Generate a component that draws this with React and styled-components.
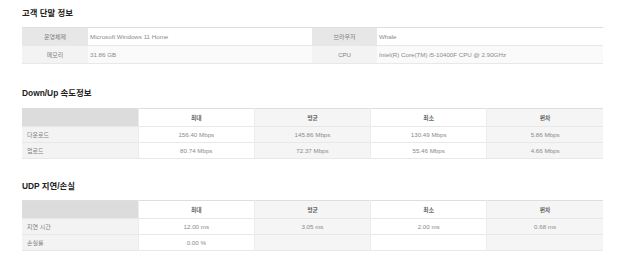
import React from 'react'
import styled, { createGlobalStyle } from 'styled-components'

const GlobalStyle = createGlobalStyle`
  html, body {
    margin: 0;
    padding: 0;
    background: #fff;
  }
  body {
    font-family: "Liberation Sans", "Noto Sans CJK KR", sans-serif;
  }
`

const Page = styled.div`
  width: 581px;
  padding: 7px 0 0 22px;
  display: flex;
  flex-direction: column;
`

const Section = styled.section`
  display: flex;
  flex-direction: column;
  gap: ${(p) => p.$gap || 8}px;
  margin-bottom: ${(p) => p.$mb || 21}px;
`

const Title = styled.h2`
  margin: 0;
  height: 12px;
  line-height: 12px;
  font-size: 8.4px;
  font-weight: 700;
  color: #222;
`

const Table = styled.table`
  width: 100%;
  table-layout: fixed;
  border-collapse: collapse;
  border-top: 1px solid #dedede;
  border-bottom: 1px solid #ececec;
`

const Row = styled.tr`
  height: ${(p) => p.$h || 17}px;
  border-bottom: 1px solid #e8e8e8;
`

const Label = styled.th`
  padding: 0 5px;
  font-size: 6px;
  font-weight: 400;
  color: #808080;
  text-align: ${(p) => (p.$left ? 'left' : 'center')};
  background: ${(p) => p.$bg || '#f3f3f3'};
`

const Value = styled.td`
  padding: 0 2px;
  font-size: 6.2px;
  color: #8a8a8a;
  text-align: ${(p) => (p.$center ? 'center' : 'left')};
  background: ${(p) => p.$bg || '#fff'};
  border-left: ${(p) => (p.$line ? '1px solid #ececec' : 'none')};
  white-space: nowrap;
  overflow: hidden;
`

const Head = styled.th`
  font-size: 5.8px;
  font-weight: 700;
  color: #666;
  text-align: center;
  background: ${(p) => p.$bg || '#fff'};
  border-left: ${(p) => (p.$first ? 'none' : '1px solid #ececec')};
`

const info = [
  ['운영체제', 'Microsoft Windows 11 Home', '브라우저', 'Whale'],
  ['메모리', '31.86 GB', 'CPU', 'Intel(R) Core(TM) i5-10400F CPU @ 2.90GHz'],
]

const cols = ['최대', '평균', '최소', '편차']
const colBg = ['#fff', '#f5f5f5', '#fff', '#f5f5f5']

const speed = [
  ['다운로드', '156.40 Mbps', '145.86 Mbps', '130.49 Mbps', '5.86 Mbps'],
  ['업로드', '80.74 Mbps', '72.37 Mbps', '55.46 Mbps', '4.66 Mbps'],
]

const udp = [
  ['지연 시간', '12.00 ms', '3.05 ms', '2.00 ms', '0.68 ms'],
  ['손실률', '0.00 %', '', '', ''],
]

const InfoTable = () => (
  <Table>
    <colgroup>
      <col style={{ width: 66 }} />
      <col style={{ width: 224 }} />
      <col style={{ width: 65 }} />
      <col />
    </colgroup>
    <tbody>
      {info.map((r, i) => (
        <Row key={i} $h={18}>
          <Label $bg={i === 0 ? '#e7e7e7' : '#f3f3f3'}>{r[0]}</Label>
          <Value $bg={i === 0 ? '#fff' : '#fafafa'}>{r[1]}</Value>
          <Label $bg={i === 0 ? '#e7e7e7' : '#f3f3f3'}>{r[2]}</Label>
          <Value $bg={i === 0 ? '#fff' : '#fafafa'}>{r[3]}</Value>
        </Row>
      ))}
    </tbody>
  </Table>
)

const StatTable = ({ rows }) => (
  <Table>
    <thead>
      <Row $h={18}>
        <Head $first $bg="#dcdcdc" />
        {cols.map((c, i) => (
          <Head key={c} $bg={colBg[i]}>
            {c}
          </Head>
        ))}
      </Row>
    </thead>
    <tbody>
      {rows.map((r) => (
        <Row key={r[0]} $h={16}>
          <Label $left>{r[0]}</Label>
          {r.slice(1).map((v, i) => (
            <Value key={i} $center $line $bg={colBg[i]}>
              {v}
            </Value>
          ))}
        </Row>
      ))}
    </tbody>
  </Table>
)

export default function App() {
  return (
    <>
      <GlobalStyle />
      <Page>
        <Section $gap={8} $mb={23}>
          <Title>고객 단말 정보</Title>
          <InfoTable />
        </Section>
        <Section $gap={9} $mb={21}>
          <Title>Down/Up 속도정보</Title>
          <StatTable rows={speed} />
        </Section>
        <Section $gap={8}>
          <Title>UDP 지연/손실</Title>
          <StatTable rows={udp} />
        </Section>
      </Page>
    </>
  )
}
